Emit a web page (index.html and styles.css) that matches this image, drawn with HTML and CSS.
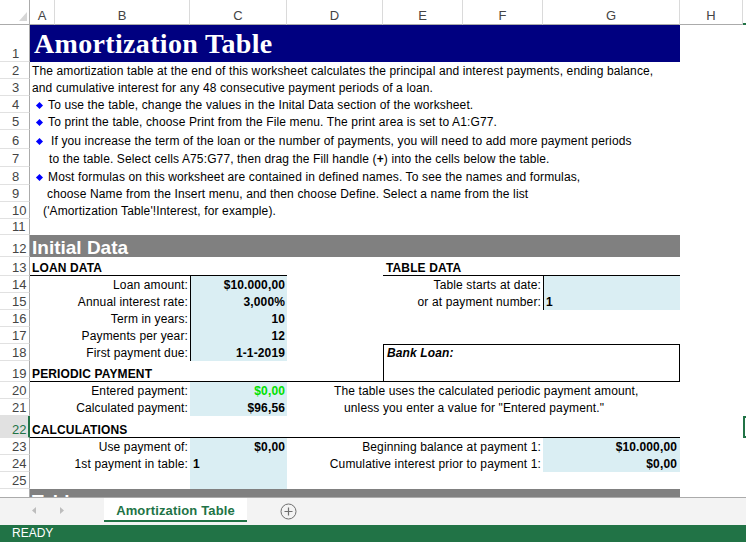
FILE: index.html
```html
<!DOCTYPE html>
<html>
<head>
<meta charset="utf-8">
<title>Amortization Table</title>
<link rel="stylesheet" href="styles.css">
</head>
<body>
<div class="sheet">
	<div class="row hdr">
		<div class="corner"><svg width="8" height="9" viewBox="0 0 8 9"><polygon points="8,0 8,9 0,9" fill="#d6d6d6"/></svg></div>
		<div class="ch">A</div>
		<div class="ch">B</div>
		<div class="ch">C</div>
		<div class="ch">D</div>
		<div class="ch">E</div>
		<div class="ch">F</div>
		<div class="ch">G</div>
		<div class="ch">H</div>
		<div class="ch ch-sel"></div>
	</div>
	<div class="row t37">
		<div class="rh">1</div>
		<div class="title a-g">Amortization Table</div>
	</div>
	<div class="row">
		<div class="rh">2</div>
		<div class="c a-all">The amortization table at the end of this worksheet calculates the principal and interest payments, ending balance,</div>
	</div>
	<div class="row">
		<div class="rh">3</div>
		<div class="c a-all">and cumulative interest for any 48 consecutive payment periods of a loan.</div>
	</div>
	<div class="row">
		<div class="rh">4</div>
		<div class="c a-all"><i class="dia"></i>To use the table, change the values in the Inital Data section of the worksheet.</div>
	</div>
	<div class="row">
		<div class="rh">5</div>
		<div class="c a-all"><i class="dia"></i>To print the table, choose Print from the File menu. The print area is set to A1:G77.</div>
	</div>
	<div class="row t19">
		<div class="rh">6</div>
		<div class="c a-all"><i class="dia wide"></i>If you increase the term of the loan or the number of payments, you will need to add more payment periods</div>
	</div>
	<div class="row t18">
		<div class="rh">7</div>
		<div class="c a-all in19">to the table. Select cells A75:G77, then drag the Fill handle (<b>+</b>) into the cells below the table.</div>
	</div>
	<div class="row t18">
		<div class="rh">8</div>
		<div class="c a-all"><i class="dia"></i>Most formulas on this worksheet are contained in defined names. To see the names and formulas,</div>
	</div>
	<div class="row">
		<div class="rh">9</div>
		<div class="c a-all in17">choose Name from the Insert menu, and then choose Define. Select a name from the list</div>
	</div>
	<div class="row">
		<div class="rh">10</div>
		<div class="c a-all in13">('Amortization Table'!Interest, for example).</div>
	</div>
	<div class="row t16">
		<div class="rh">11</div>
	</div>
	<div class="row t22">
		<div class="rh">12</div>
		<div class="band a-g">Initial Data</div>
	</div>
	<div class="row t19">
		<div class="rh">13</div>
		<div class="c a-c ul b">LOAN DATA</div>
		<div class="c e-g ul b pl3">TABLE DATA</div>
	</div>
	<div class="row">
		<div class="rh">14</div>
		<div class="c xb r">Loan amount:</div>
		<div class="c xc r b fill lb">$10.000,00</div>
		<div class="c e-f r">Table starts at date:</div>
		<div class="c xg fill lb"></div>
	</div>
	<div class="row">
		<div class="rh">15</div>
		<div class="c xb r">Annual interest rate:</div>
		<div class="c xc r b fill lb">3,000%</div>
		<div class="c e-f r">or at payment number:</div>
		<div class="c xg fill lb b">1</div>
	</div>
	<div class="row">
		<div class="rh">16</div>
		<div class="c xb r">Term in years:</div>
		<div class="c xc r b fill lb">10</div>
	</div>
	<div class="row">
		<div class="rh">17</div>
		<div class="c xb r">Payments per year:</div>
		<div class="c xc r b fill lb">12</div>
	</div>
	<div class="row">
		<div class="rh">18</div>
		<div class="c xb r">First payment due:</div>
		<div class="c xc r b fill lb">1-1-2019</div>
		<div class="c e-g box-top b pl3"><em>Bank Loan:</em></div>
	</div>
	<div class="row t21">
		<div class="rh">19</div>
		<div class="c a-g ul b">PERIODIC PAYMENT</div>
		<div class="e-g box-side"></div>
	</div>
	<div class="row">
		<div class="rh">20</div>
		<div class="c xb r">Entered payment:</div>
		<div class="c xc r b fill green">$0,00</div>
		<div class="c d-g in47">The table uses the calculated periodic payment amount,</div>
	</div>
	<div class="row">
		<div class="rh">21</div>
		<div class="c xb r">Calculated payment:</div>
		<div class="c xc r b fill">$96,56</div>
		<div class="c d-g in57">unless you enter a value for "Entered payment."</div>
	</div>
	<div class="row t22">
		<div class="rh sel">22</div>
		<div class="c a-g ul b">CALCULATIONS</div>
		<div class="sel-cell"></div>
	</div>
	<div class="row">
		<div class="rh">23</div>
		<div class="c xb r">Use payment of:</div>
		<div class="c xc r b fill">$0,00</div>
		<div class="c d-f r">Beginning balance at payment 1:</div>
		<div class="c xg r b fill pr3">$10.000,00</div>
	</div>
	<div class="row">
		<div class="rh">24</div>
		<div class="c xb r">1st payment in table:</div>
		<div class="c xc b fill pl3">1</div>
		<div class="c d-f r">Cumulative interest prior to payment 1:</div>
		<div class="c xg r b fill pr3">$0,00</div>
	</div>
	<div class="row">
		<div class="rh">25</div>
		<div class="c xc fill"></div>
	</div>
	<div class="row t8">
		<div class="rh"></div>
		<div class="band a-g tall">Table</div>
	</div>
</div>
<div class="tabs">
	<div class="nav">
		<svg width="4" height="7" viewBox="0 0 4 7"><polygon points="4,0 4,7 0,3.5" fill="#bdbdbd"/></svg>
		<svg width="4" height="7" viewBox="0 0 4 7"><polygon points="0,0 0,7 4,3.5" fill="#bdbdbd"/></svg>
	</div>
	<div class="tab">Amortization Table</div>
	<svg class="add" width="17" height="17" viewBox="0 0 17 17">
		<circle cx="8.5" cy="8.5" r="7.5" fill="none" stroke="#6f6f6f" stroke-width="1"/>
		<path d="M8.5 4.5v8M4.5 8.5h8" stroke="#6f6f6f" stroke-width="1.2"/>
	</svg>
</div>
<div class="status">READY</div>
</body>
</html>
```

FILE: styles.css
```css
* {
	box-sizing: border-box;
}
body {
	margin: 0;
	width: 746px;
	height: 542px;
	overflow: hidden;
	background: #fff;
	color: #000;
	font-family: "Liberation Sans", Arial, sans-serif;
	font-size: 12px;
}

/* sheet grid */
.sheet {
	height: 497px;
	overflow: hidden;
}
.row {
	display: grid;
	grid-template-columns: 30px 25px 135px 97px 96px 80px 80px 137px 63px 1fr;
	height: 17px;
}
.row > * {
	grid-row: 1;
}
.hdr { height: 25px; }
.t37 { height: 37px; }
.t22 { height: 22px; }
.t21 { height: 21px; }
.t19 { height: 19px; }
.t18 { height: 18px; }
.t16 { height: 16px; }
.t8 { height: 8px; overflow: hidden; }

/* headers */
.corner {
	border-right: 1px solid #ababab;
	border-bottom: 1px solid #ababab;
	display: flex;
	justify-content: flex-end;
	align-items: flex-end;
	padding: 0 2px 3px 0;
}
.ch {
	border-right: 1px solid #dadada;
	border-bottom: 1px solid #ababab;
	color: #444;
	font-size: 13px;
	display: flex;
	justify-content: center;
	align-items: flex-end;
	line-height: 14px;
	padding-bottom: 1px;
}
.ch-sel {
	border-right: 0;
	border-bottom: 2px solid #217346;
}
.rh {
	grid-column: 1;
	border-right: 1px solid #ababab;
	border-bottom: 1px solid #e1e1e1;
	color: #444;
	font-size: 13px;
	display: flex;
	align-items: flex-end;
	line-height: 14px;
	padding-left: 12px;
}
.rh.sel {
	background: #e1e1e1;
	color: #217346;
	border-right: 2px solid #217346;
}
.sel-cell {
	grid-column: 10;
	border: 2px solid #217346;
	border-right: 0;
}

/* cells */
.c {
	display: flex;
	align-items: flex-end;
	line-height: 14px;
	padding: 0 0 1px 2px;
	white-space: nowrap;
	letter-spacing: 0.13px;
}
.r {
	justify-content: flex-end;
	padding-right: 2px;
}
.b { font-weight: bold; }
.pl3 { padding-left: 3px; }
.pr3 { padding-right: 3px; }
.in13 { padding-left: 13px; }
.in17 { padding-left: 17px; }
.in19 { padding-left: 19px; }
.in47 { padding-left: 47px; }
.in57 { padding-left: 57px; }
.fill { background: #daeef3; }
.lb { border-left: 1px solid #000; }
.ul {
	border-bottom: 1px solid #000;
	padding-bottom: 0;
}
.green { color: #00e000; }

.a-all { grid-column: 2 / 11; }
.a-g { grid-column: 2 / 9; }
.a-c { grid-column: 2 / 5; }
.d-g { grid-column: 5 / 9; }
.d-f { grid-column: 5 / 8; }
.e-g { grid-column: 6 / 9; }
.e-f { grid-column: 6 / 8; }
.xb { grid-column: 3; }
.xc { grid-column: 4; }
.xg { grid-column: 8; }

.box-top {
	border: 1px solid #000;
	border-bottom: 0;
	padding-bottom: 1px;
}
.box-side {
	border-left: 1px solid #000;
	border-right: 1px solid #000;
}

.dia {
	display: block;
	width: 5px;
	height: 5px;
	background: #0000ff;
	transform: rotate(45deg);
	margin: 0 6px 4px 5px;
	flex: none;
}
.dia.wide { margin-right: 9px; }

.title {
	background: #000080;
	color: #fff;
	font-family: "Liberation Serif", "Times New Roman", serif;
	font-weight: bold;
	font-size: 28px;
	letter-spacing: 0.33px;
	line-height: 37px;
	padding-left: 4px;
	white-space: nowrap;
}
.band {
	background: #808080;
	color: #fff;
	font-weight: bold;
	font-size: 19px;
	line-height: 18px;
	padding-left: 2px;
	display: flex;
	align-items: flex-end;
	white-space: nowrap;
}
.band.tall {
	height: 22px;
	align-self: start;
}

/* sheet tabs */
.tabs {
	height: 28px;
	background: #f3f3f3;
	border-top: 1px solid #ababab;
	display: flex;
	align-items: flex-start;
}
.nav {
	width: 104px;
	height: 27px;
	display: flex;
	align-items: center;
	gap: 24px;
	padding: 0 0 2px 32px;
}
.tab {
	width: 143px;
	height: 24px;
	background: #fff;
	border-bottom: 2px solid #217346;
	color: #217346;
	font-weight: bold;
	font-size: 13px;
	letter-spacing: 0.15px;
	line-height: 17px;
	padding-top: 4px;
	text-align: center;
}
.add {
	margin: 5px 0 0 33px;
}
.status {
	height: 17px;
	background: #217346;
	color: #fff;
	line-height: 17px;
	padding-left: 12px;
}
```
